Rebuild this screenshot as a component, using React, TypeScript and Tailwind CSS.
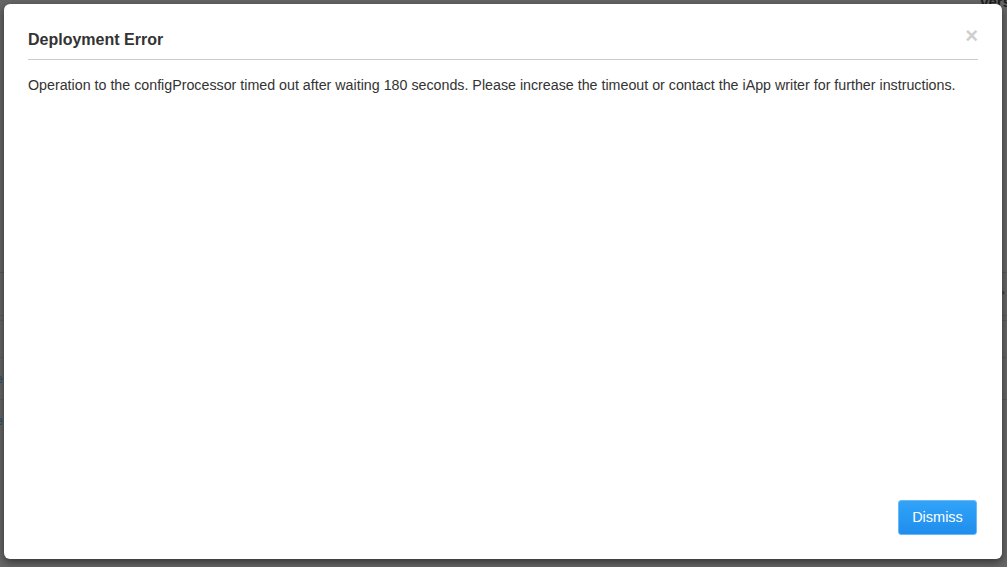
import React from "react";

export default function App() {
  const font = { fontFamily: '"Liberation Sans", Arial, Helvetica, sans-serif' };
  return (
    <div className="relative w-[1007px] h-[567px] overflow-hidden bg-[#666666]" style={font}>
      {/* underlying page (dimmed) */}
      <div className="flex flex-col w-full h-full">
        <div className="h-[272px] flex justify-end">
          <span className="text-[15px] font-bold text-[#1e1e1e] leading-none mt-[-6px] mr-[-4px]">vers</span>
        </div>
        <div className="h-[43px] border-t border-[#595959] flex justify-end items-center">
          <span className="text-[12px] text-[#3a3a3a] mr-[2px] mt-[-2px]">&gt;</span>
        </div>
        <div className="h-[5px] border-t border-[#5c5c5c]" />
        <div className="h-[37px] border-t border-[#5c5c5c]" />
        <div className="h-[42px] border-t border-[#5c5c5c] flex items-center">
          <span className="text-[12px] text-[#23506e] ml-[-4px]">e</span>
        </div>
        <div className="h-[42px] border-t border-[#5c5c5c] flex items-center">
          <span className="text-[12px] text-[#23506e] ml-[-4px]">e</span>
        </div>
        <div className="flex-1" />
      </div>

      {/* modal */}
      <div className="absolute left-[4px] top-[4px] w-[998px] h-[555px] bg-white rounded-[6px] shadow-[0_3px_9px_rgba(0,0,0,0.5)] flex flex-col">
        <div className="mx-[24px] mt-[26px] pb-[9px] border-b border-[#cccccc] flex items-start justify-between">
          <h3 className="text-[16px] font-bold text-[#333333] leading-[20px]">Deployment Error</h3>
          <span className="text-[22px] font-bold text-[#cfcfcf] leading-[14px] mr-[0px] mt-[-1px]">×</span>
        </div>
        <div className="mx-[24px] mt-[15px] text-[14.25px] text-[#333333] leading-[20px]">
          Operation to the configProcessor timed out after waiting 180 seconds. Please increase the timeout or contact the iApp writer for further instructions.
        </div>
        <div className="flex-1" />
        <div className="flex justify-end mr-[25px] mb-[24px]">
          <button className="w-[79px] h-[35px] rounded-[3px] border border-[#6ab8f5] bg-gradient-to-b from-[#31a3f8] to-[#1f8eed] text-white text-[14.5px]">
            Dismiss
          </button>
        </div>
      </div>
    </div>
  );
}
